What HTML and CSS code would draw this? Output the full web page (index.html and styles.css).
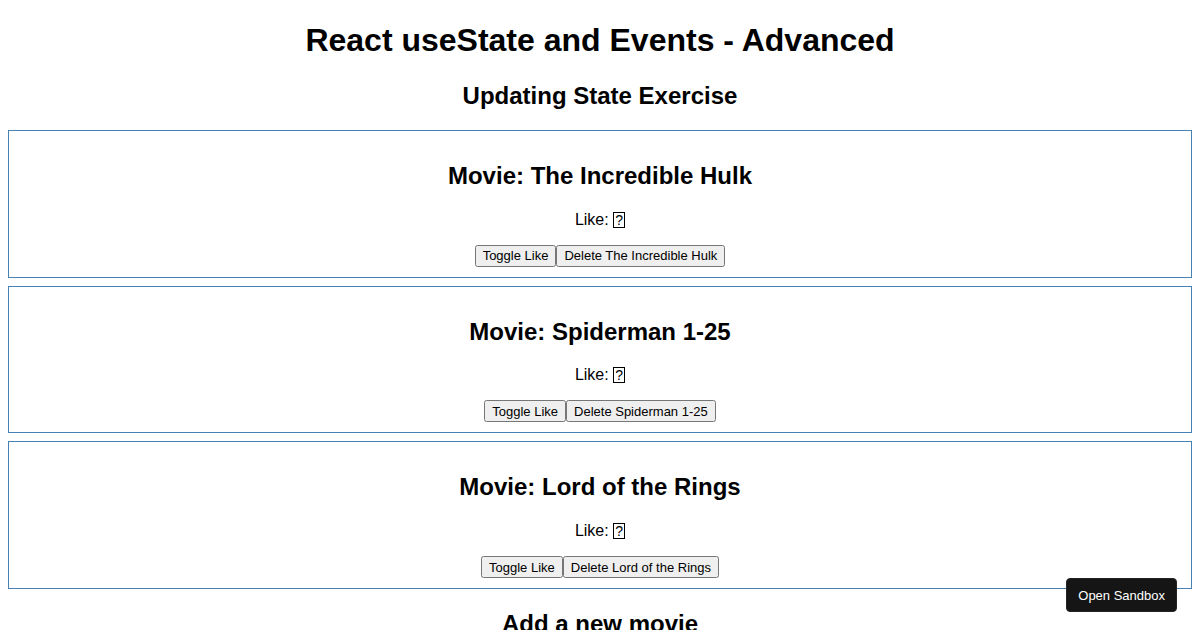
FILE: index.html
```html
<!DOCTYPE html>
<html lang="en">
<head>
    <meta charset="UTF-8">
    <meta name="viewport" content="width=device-width, initial-scale=1.0">
    <title>React App</title>
    <link rel="stylesheet" href="styles.css">
</head>
<body>
    <div class="app">
        <h1>React useState and Events - Advanced</h1>
        <h2>Updating State Exercise</h2>

        <!-- movie list -->
        <div class="movie">
            <h2>Movie: The Incredible Hulk</h2>
            <p>Like: <span class="glyph">?</span></p>
            <button type="button">Toggle Like</button><button type="button">Delete The Incredible Hulk</button>
        </div>
        <div class="movie">
            <h2>Movie: Spiderman 1-25</h2>
            <p>Like: <span class="glyph">?</span></p>
            <button type="button">Toggle Like</button><button type="button">Delete Spiderman 1-25</button>
        </div>
        <div class="movie">
            <h2>Movie: Lord of the Rings</h2>
            <p>Like: <span class="glyph">?</span></p>
            <button type="button">Toggle Like</button><button type="button">Delete Lord of the Rings</button>
        </div>

        <h2>Add a new movie</h2>
    </div>

    <button type="button" class="open-sandbox">Open Sandbox</button>
</body>
</html>
```

FILE: styles.css
```css
body {
    margin: 0 8px;
    font-family: Helvetica, "Liberation Sans", Arial, sans-serif;
}

.app {
    text-align: center;
}

h1 {
    line-height: 38px;
}

h2 {
    line-height: 29px;
}

p {
    line-height: 19px;
}

.movie {
    border: 1px solid steelblue;
    margin: 8px 0;
    padding: 10px;
}

button {
    height: 22px;
    font-family: inherit;
    font-size: 13px;
    vertical-align: top;
}

/* boxed question mark */
.glyph {
    display: inline-block;
    width: 10px;
    border: 1px solid #000;
    font-size: 14px;
    line-height: 14px;
}

.open-sandbox {
    position: fixed;
    right: 23px;
    bottom: 18px;
    height: 34px;
    padding: 0 11px;
    border: 1px solid #242424;
    border-radius: 4px;
    background-color: #151515;
    color: #fff;
}
```
